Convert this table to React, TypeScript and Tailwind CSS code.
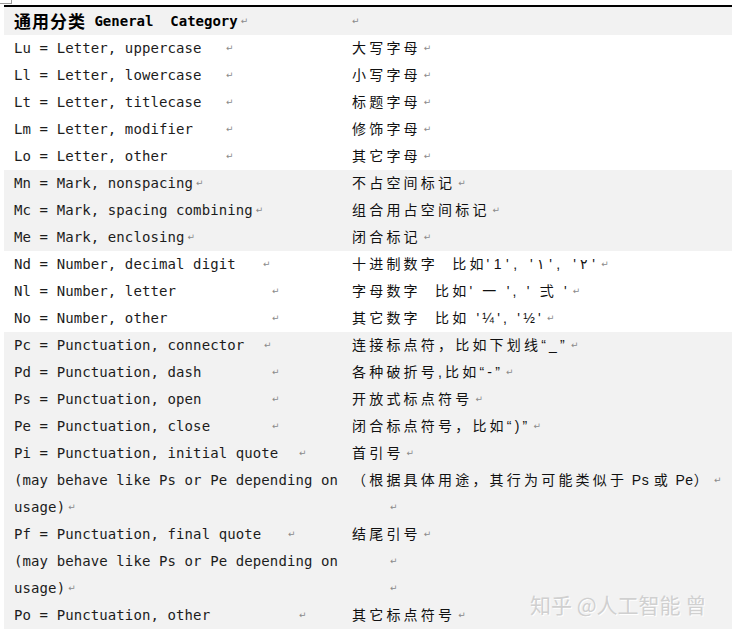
import type { ReactNode } from "react";

type Row = {
  l: string;
  lw?: string;
  lRet?: boolean;
  r: ReactNode;
  rBlank?: boolean;
};

type Group = { bg: string; rows: Row[] };

const arabicDigits = (
  <span className="whitespace-pre">
    十进制数字  比如
    <span className="tracking-[4.5px]">'1', '</span>
    <span className="inline-block pr-[4px]">١</span>
    <span className="tracking-[4.5px]">', '</span>
    <span className="inline-block pr-[4px]">٢</span>
    <span>'</span>
  </span>
);

const parenLine = (
  <span className="whitespace-pre">
    （根据具体用途，其行为可能类似于<span className="tracking-[0.6px]"> Ps </span>或<span className="tracking-[0.6px]"> Pe</span>）
  </span>
);

const groups: Group[] = [
  {
    bg: "bg-white",
    rows: [
      { l: "Lu = Letter, uppercase", lw: "w-[209px]", lRet: true, r: "大写字母" },
      { l: "Ll = Letter, lowercase", lw: "w-[209px]", lRet: true, r: "小写字母" },
      { l: "Lt = Letter, titlecase", lw: "w-[209px]", lRet: true, r: "标题字母" },
      { l: "Lm = Letter, modifier", lw: "w-[209px]", lRet: true, r: "修饰字母" },
      { l: "Lo = Letter, other", lw: "w-[209px]", lRet: true, r: "其它字母" },
    ],
  },
  {
    bg: "bg-[#f2f2f2]",
    rows: [
      { l: "Mn = Mark, nonspacing", lRet: true, r: "不占空间标记" },
      { l: "Mc = Mark, spacing combining", lRet: true, r: "组合用占空间标记" },
      { l: "Me = Mark, enclosing", lRet: true, r: "闭合标记" },
    ],
  },
  {
    bg: "bg-white",
    rows: [
      { l: "Nd = Number, decimal digit", lw: "w-[246px]", lRet: true, r: arabicDigits },
      { l: "Nl = Number, letter", lw: "w-[255px]", lRet: true, r: "字母数字  比如' 一 ', ' 弍 '" },
      { l: "No = Number, other", lw: "w-[255px]", lRet: true, r: "其它数字  比如 '¼', '½'" },
    ],
  },
  {
    bg: "bg-[#f2f2f2]",
    rows: [
      { l: "Pc = Punctuation, connector", lw: "w-[247px]", lRet: true, r: "连接标点符，比如下划线“_”" },
      { l: "Pd = Punctuation, dash", lw: "w-[255px]", lRet: true, r: "各种破折号,比如“-”" },
      { l: "Ps = Punctuation, open", lw: "w-[255px]", lRet: true, r: "开放式标点符号" },
      { l: "Pe = Punctuation, close", lw: "w-[255px]", lRet: true, r: "闭合标点符号，比如“)”" },
      { l: "Pi = Punctuation, initial quote", lw: "w-[282px]", lRet: true, r: "首引号" },
      { l: "(may behave like Ps or Pe depending on", r: parenLine },
      { l: "usage)", lRet: true, r: "", rBlank: true },
      { l: "Pf = Punctuation, final quote", lw: "w-[271px]", lRet: true, r: "结尾引号" },
      { l: "(may behave like Ps or Pe depending on", r: "", rBlank: true },
      { l: "usage)", lRet: true, r: "", rBlank: true },
      { l: "Po = Punctuation, other", lw: "w-[282px]", lRet: true, r: "其它标点符号" },
    ],
  },
];

const Ret = () => (
  <span className="ml-[3px] text-[9px] leading-none text-[#8a8a8a] font-['DejaVu_Sans',sans-serif]">↵</span>
);

const TableRow = ({ row }: { row: Row }) => (
  <div className="flex h-[27px] items-center">
    <div className="flex w-[338px] shrink-0 items-center pl-[10px] text-[14px] tracking-[0.1px] text-[#1c1c1c] font-['DejaVu_Sans_Mono',monospace]">
      <span className={`${row.lw ?? ""} shrink-0 whitespace-pre`}>{row.l}</span>
      {row.lRet && <Ret />}
    </div>
    <div className="flex flex-1 items-center pl-[10px] text-[14px] tracking-[3.2px] text-[#111] font-['Liberation_Sans','Noto_Sans_CJK_SC',sans-serif]">
      {row.rBlank ? <span className="w-[35px] shrink-0" /> : <span className="whitespace-pre">{row.r}</span>}
      <Ret />
    </div>
  </div>
);

export default function App() {
  return (
    <div className="relative h-[634px] w-[732px] overflow-hidden bg-white pl-[4px] pt-[5px]">
      {/* cell corner mark */}
      <div className="absolute left-0 top-0 h-[4px] w-[12px] border-b border-r border-[#9a9a9a]" />

      <div className="border-t-2 border-black">
        <div className="flex h-[28px] items-center bg-[#f2f2f2]">
          <div className="flex w-[338px] shrink-0 items-center pl-[10px]">
            <span className="text-[17px] font-bold tracking-[1px] text-black font-['Noto_Sans_CJK_SC',sans-serif]">通用分类</span>
            <span className="whitespace-pre text-[14px] font-bold text-black font-['DejaVu_Sans_Mono',monospace]"> General  Category</span>
            <Ret />
          </div>
          <div className="flex items-center pl-[7px]">
            <Ret />
          </div>
        </div>

        {groups.map((g, gi) => (
          <div key={gi} className={g.bg}>
            {g.rows.map((row, ri) => (
              <TableRow key={ri} row={row} />
            ))}
          </div>
        ))}
      </div>

      <div className="absolute left-[530px] top-[589px] whitespace-pre text-[21px] text-[#d0d0d0] [text-shadow:1px_1px_0_#ffffff] font-['Noto_Sans_CJK_SC',sans-serif]">
        知乎 @人工智能 曾
      </div>
    </div>
  );
}
